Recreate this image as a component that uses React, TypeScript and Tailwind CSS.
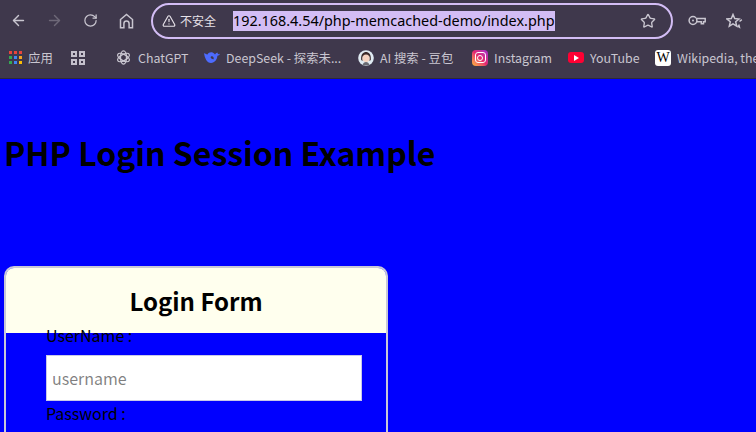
import { ArrowLeft, ArrowRight, RotateCw, TriangleAlert, Star } from "lucide-react";

const cjk = { fontFamily: "'Noto Sans CJK SC', sans-serif" };

function AppsIcon() {
  const colors = ["#e8453c", "#e8453c", "#e8453c", "#34a853", "#4285f4", "#f5a623", "#34a853", "#4285f4", "#fbbc05"];
  return (
    <div className="grid grid-cols-[3px_3px_3px] gap-[2px] w-[13px] shrink-0">
      {colors.map((c, i) => (
        <span key={i} className="block w-[3px] h-[3px]" style={{ backgroundColor: c }} />
      ))}
    </div>
  );
}

function GridIcon() {
  return (
    <div className="grid grid-cols-[6px_6px] gap-[2px] w-[14px]">
      {[0, 1, 2, 3].map((i) => (
        <span key={i} className="block w-[6px] h-[6px] border-2 border-[#c4c0cc]" />
      ))}
    </div>
  );
}

function HomeIcon() {
  return (
    <svg width="15" height="16" viewBox="0 0 15 16" fill="none" stroke="#c9c6d0" strokeWidth="1.5" className="ml-[21px] shrink-0">
      <path d="M1.5 6.5 7.5 1.5l6 5v8.2h-3.4v-4a2.6 2.6 0 0 0-5.2 0v4H1.5z" />
    </svg>
  );
}

function KeyIcon() {
  return (
    <svg width="18" height="11" viewBox="0 0 18 11" fill="none" stroke="#c9c6d0" strokeWidth="1.5" className="ml-[15px] shrink-0">
      <circle cx="5" cy="5.5" r="3.9" />
      <circle cx="5" cy="5.5" r="1" fill="#c9c6d0" stroke="none" />
      <path d="M9 3.5h8.2v3.2h-1.7v2h-2.2v-2H9" />
    </svg>
  );
}

function StarListIcon() {
  return (
    <svg width="17" height="16" viewBox="0 0 17 16" fill="none" stroke="#c9c6d0" strokeWidth="1.5" className="ml-[20px] shrink-0">
      <path d="M7 1.5 8.7 5.6l4.3.4-3.3 2.8 1 4.3L7 10.8l-3.7 2.3 1-4.3L1 6l4.3-.4z" />
      <path d="M13.5 8.5 15.8 6.6M12.8 11.5l.6 2.6-2-1.2" />
    </svg>
  );
}

function ChatGptIcon() {
  return (
    <svg width="15" height="15" viewBox="0 0 16 16" fill="none" stroke="#c9c6d0" strokeWidth="1.4" className="shrink-0">
      <ellipse cx="8" cy="8" rx="3.2" ry="7" />
      <ellipse cx="8" cy="8" rx="3.2" ry="7" transform="rotate(60 8 8)" />
      <ellipse cx="8" cy="8" rx="3.2" ry="7" transform="rotate(120 8 8)" />
    </svg>
  );
}

function DeepSeekIcon() {
  return (
    <svg width="16" height="13" viewBox="0 0 16 13" className="shrink-0">
      <path
        fillRule="evenodd"
        d="M0 2c1 .8 2 1 3.5 1.5C4.5 1.5 7 .8 9 1.8c.8.4 1.5 1 2 1.8.5-.8 1.4-1.6 2.5-2 .2.7 0 1.2.8 1.6l1.7-.4c-.5 1.2-1.4 1.8-2.6 2-.2 3.6-2.6 7.2-6.4 7.2C3 12 .6 7 0 2zm8 3.2c-1 0-1.6.6-1.4 1.4.5 1 2 2 3 1.6.5-1.4-.3-3-1.6-3z"
        fill="#4d6bfe"
      />
    </svg>
  );
}

function DoubaoIcon() {
  return (
    <svg width="16" height="16" viewBox="0 0 16 16" className="shrink-0">
      <circle cx="8" cy="8" r="7.8" fill="#dfeaf2" />
      <path d="M3.2 10C2.6 4 5.5 2 8 2s5.4 2 4.8 8l-1.3 1V6.5h-7V11z" fill="#3a2a2a" />
      <ellipse cx="8" cy="8.2" rx="3.5" ry="3.8" fill="#f4d2c0" />
      <path d="M4.5 15.2c.5-2.5 2-3.2 3.5-3.2s3 .7 3.5 3.2z" fill="#6a6a72" />
    </svg>
  );
}

function InstagramIcon() {
  return (
    <div className="w-[16px] h-[16px] shrink-0 rounded-[4px] bg-gradient-to-tr from-[#fdb52a] via-[#e6246e] to-[#a21fd0] flex items-center justify-center">
      <div className="w-[11px] h-[11px] rounded-[3px] border border-white flex items-center justify-center">
        <div className="w-[6px] h-[6px] rounded-full border border-white" />
      </div>
    </div>
  );
}

function YouTubeIcon() {
  return (
    <div className="w-[16px] h-[11px] shrink-0 rounded-[3px] bg-[#ff0033] flex items-center justify-center">
      <span className="block w-0 h-0 border-y-[3px] border-y-transparent border-l-[5px] border-l-white" />
    </div>
  );
}

function WikiIcon() {
  return (
    <div
      className="w-[16px] h-[16px] shrink-0 rounded-[3px] bg-white flex items-center justify-center text-[14px] leading-none text-black"
      style={{ fontFamily: "'Liberation Serif', serif" }}
    >
      W
    </div>
  );
}

function Bookmark({ icon, label, className }: { icon: React.ReactNode; label: string; className: string }) {
  return (
    <div className={`flex items-center shrink-0 gap-[6px] ${className}`}>
      {icon}
      <span className="text-[12.4px] text-[#c9c6d0] whitespace-nowrap">{label}</span>
    </div>
  );
}

export default function App() {
  return (
    <div className="w-[756px] h-[432px] overflow-hidden bg-[#0000ff] text-black" style={cjk}>
      <div className="h-[79px] bg-[#3f384c] border-b border-[#2e2a3a]">
        <div className="h-[41px] flex items-center text-[#c9c6d0]">
          <ArrowLeft size={17} className="ml-[10px] shrink-0" />
          <ArrowRight size={17} className="ml-[19px] shrink-0 text-[#6e6878]" />
          <RotateCw size={15} className="ml-[20px] shrink-0" />
          <HomeIcon />
          <div className="ml-[17px] w-[522px] h-[36px] shrink-0 rounded-full border-2 border-[#d3bdf5] flex items-center pl-[9px]">
            <TriangleAlert size={14} className="shrink-0 text-[#e6e1e8]" />
            <span className="ml-[4px] text-[12px] text-[#e6e1e8] whitespace-nowrap">不安全</span>
            <span
              className="ml-[17px] text-[14.4px] leading-[20px] bg-[#d3bdf5] text-black whitespace-nowrap"
              style={{ fontFamily: "'Noto Sans', sans-serif" }}
            >
              192.168.4.54/php-memcached-demo/index.php
            </span>
            <Star size={16} className="ml-auto mr-[15px] shrink-0 text-[#c9c6d0]" />
          </div>
          <KeyIcon />
          <StarListIcon />
        </div>
        <div className="h-[34px] flex items-center">
          <Bookmark icon={<AppsIcon />} label="应用" className="ml-[9px] w-[52px]" />
          <div className="ml-[10px]">
            <GridIcon />
          </div>
          <div className="ml-[15px] w-[1px] h-[16px] bg-[#5c5668]" />
          <Bookmark icon={<ChatGptIcon />} label="ChatGPT" className="ml-[16px] w-[88px] gap-[7px]" />
          <Bookmark icon={<DeepSeekIcon />} label="DeepSeek - 探索未..." className="w-[154px]" />
          <Bookmark icon={<DoubaoIcon />} label="AI 搜索 - 豆包" className="w-[114px]" />
          <Bookmark icon={<InstagramIcon />} label="Instagram" className="w-[96px]" />
          <Bookmark icon={<YouTubeIcon />} label="YouTube" className="w-[87px]" />
          <Bookmark icon={<WikiIcon />} label="Wikipedia, the" className="" />
        </div>
      </div>

      <div className="px-[4px]">
        <h1 className="text-[32px] font-bold leading-[46px] pt-[50px]">PHP Login Session Example</h1>
        <div className="mt-[91px] w-[384px] h-[300px] rounded-[10px] border-2 border-[#c8c8d8] overflow-hidden">
          <h2 className="h-[65px] bg-[#ffffee] text-[24px] font-bold flex items-center justify-center leading-none">
            Login Form
          </h2>
          <div className="pl-[40px] pr-[24px]">
            <label className="block text-[16px] leading-[24px] -mt-[10px]">UserName :</label>
            <input
              placeholder="username"
              className="mt-[8px] block w-full h-[46px] px-[5px] bg-white border border-[#c8c8e8] text-[16px] outline-none"
            />
            <label className="block text-[16px] leading-[24px]">Password :</label>
          </div>
        </div>
      </div>
    </div>
  );
}
